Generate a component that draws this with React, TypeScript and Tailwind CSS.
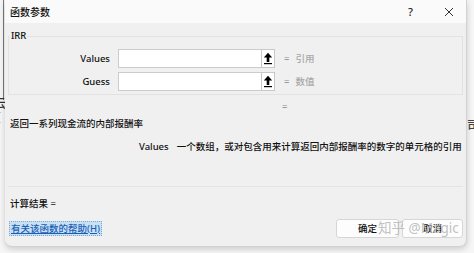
import React from "react";

const font = { fontFamily: '"Noto Sans", "Noto Sans CJK SC", sans-serif' };

function ArrowBtn() {
  return (
    <div className="w-[14px] h-full bg-white border border-[#c8c8c8] flex items-center justify-center -ml-px">
      <svg width="10" height="13" viewBox="0 0 10 13">
        <path d="M5 0.8 L9.2 5.4 L6.3 5.4 L6.3 10 L3.7 10 L3.7 5.4 L0.8 5.4 Z" fill="#000" />
        <rect x="1" y="11" width="8" height="1.2" fill="#000" />
      </svg>
    </div>
  );
}

function ArgRow({ label, hint }: { label: string; hint: string }) {
  return (
    <div className="flex items-center h-[19px]">
      <div className="w-[101px] text-right text-[#111]">{label}</div>
      <div className="ml-[8px] flex h-full">
        <div className="w-[144px] h-full bg-white border border-[#cccccc]" />
        <ArrowBtn />
      </div>
      <div className="ml-[9px] text-[#888]">=</div>
      <div className="ml-[6px] text-[#a8a8a8]">{hint}</div>
    </div>
  );
}

export default function App() {
  return (
    <div
      className="w-[474px] h-[253px] bg-[#f6f6f6] relative overflow-hidden text-[9.5px] leading-none font-medium"
      style={font}
    >
      {/* background fragments outside dialog */}
      <div className="absolute left-[3px] top-0 w-px h-[100px] bg-[#7a7a7a]" />
      <div className="absolute left-[-6px] top-[98px] text-[12px] text-[#333]">云</div>
      <div className="absolute left-[-3px] top-[111px] text-[12px] text-[#333]">(</div>
      <div className="absolute left-[90px] top-0 w-[110px] h-[2px] bg-[#d6e4f0]" />
      <div className="absolute right-[-5px] top-[120px] text-[12px] text-[#444]">司</div>

      {/* dialog */}
      <div className="ml-[5px] w-[462px] h-[247px] bg-[#f0f0f0] rounded-b-[7px] border-r border-b border-[#d2d2d2] shadow-[0_2px_6px_rgba(0,0,0,0.18)] flex flex-col relative">
        {/* title bar */}
        <div className="h-[23px] bg-[#fafafa] flex items-center shrink-0">
          <div className="ml-[5px] text-[10px] text-[#111]">函数参数</div>
          <div className="ml-auto mr-[31px] text-[11px] text-[#222]">?</div>
          <div className="mr-[12px] text-[#333]">
            <svg width="10" height="10" viewBox="0 0 10 10">
              <path d="M1 1 L9 9 M9 1 L1 9" stroke="#333" strokeWidth="1" />
            </svg>
          </div>
        </div>

        <div className="px-[3px] flex flex-col">
          <fieldset className="border border-[#e2e2e2] mt-[8px] h-[64px] pl-0 pr-0">
            <legend className="ml-[1px] px-[1px] text-[#111] leading-[10px]">IRR</legend>
            <div className="flex flex-col gap-[4px] mt-[8px]">
              <ArgRow label="Values" hint="引用" />
              <ArgRow label="Guess" hint="数值" />
            </div>
          </fieldset>

          <div className="ml-[274px] mt-[7px] text-[#888] h-[10px]">=</div>

          <div className="ml-[2px] mt-[7px] text-[#111]">返回一系列现金流的内部报酬率</div>

          <div className="ml-[131px] mt-[13px] flex text-[#111]">
            <span>Values</span>
            <span className="ml-[8px]">一个数组，或对包含用来计算返回内部报酬率的数字的单元格的引用</span>
          </div>

          <div className="mt-[35px] h-px bg-[#e4e4e4]" />

          <div className="ml-[2px] mt-[12px] text-[#111]">计算结果 =</div>
        </div>

        <div className="mt-auto mb-[8px] flex items-center px-[4px]">
          <div className="px-[1px] py-[2px] bg-[#c9e0f5] text-[#1a5fb4] underline border border-dotted border-[#7aa6d2]">
            有关该函数的帮助(H)
          </div>
          <div className="ml-auto flex gap-[3px] mr-[-1px]">
            <div className="w-[63px] h-[19px] bg-[#fdfdfd] border border-[#d6d6d6] rounded-[3px] flex items-center justify-center text-[#111]">
              确定
            </div>
            <div className="w-[61px] h-[19px] bg-[#fdfdfd] border border-[#d6d6d6] rounded-[3px] flex items-center justify-center text-[#111]">
              取消
            </div>
          </div>
        </div>

        {/* watermark */}
        <div className="absolute left-[373px] top-[222px] text-[13.5px] font-normal text-[#b9b9b9]/90 whitespace-nowrap">
          知乎 @Magic
        </div>
      </div>
    </div>
  );
}
